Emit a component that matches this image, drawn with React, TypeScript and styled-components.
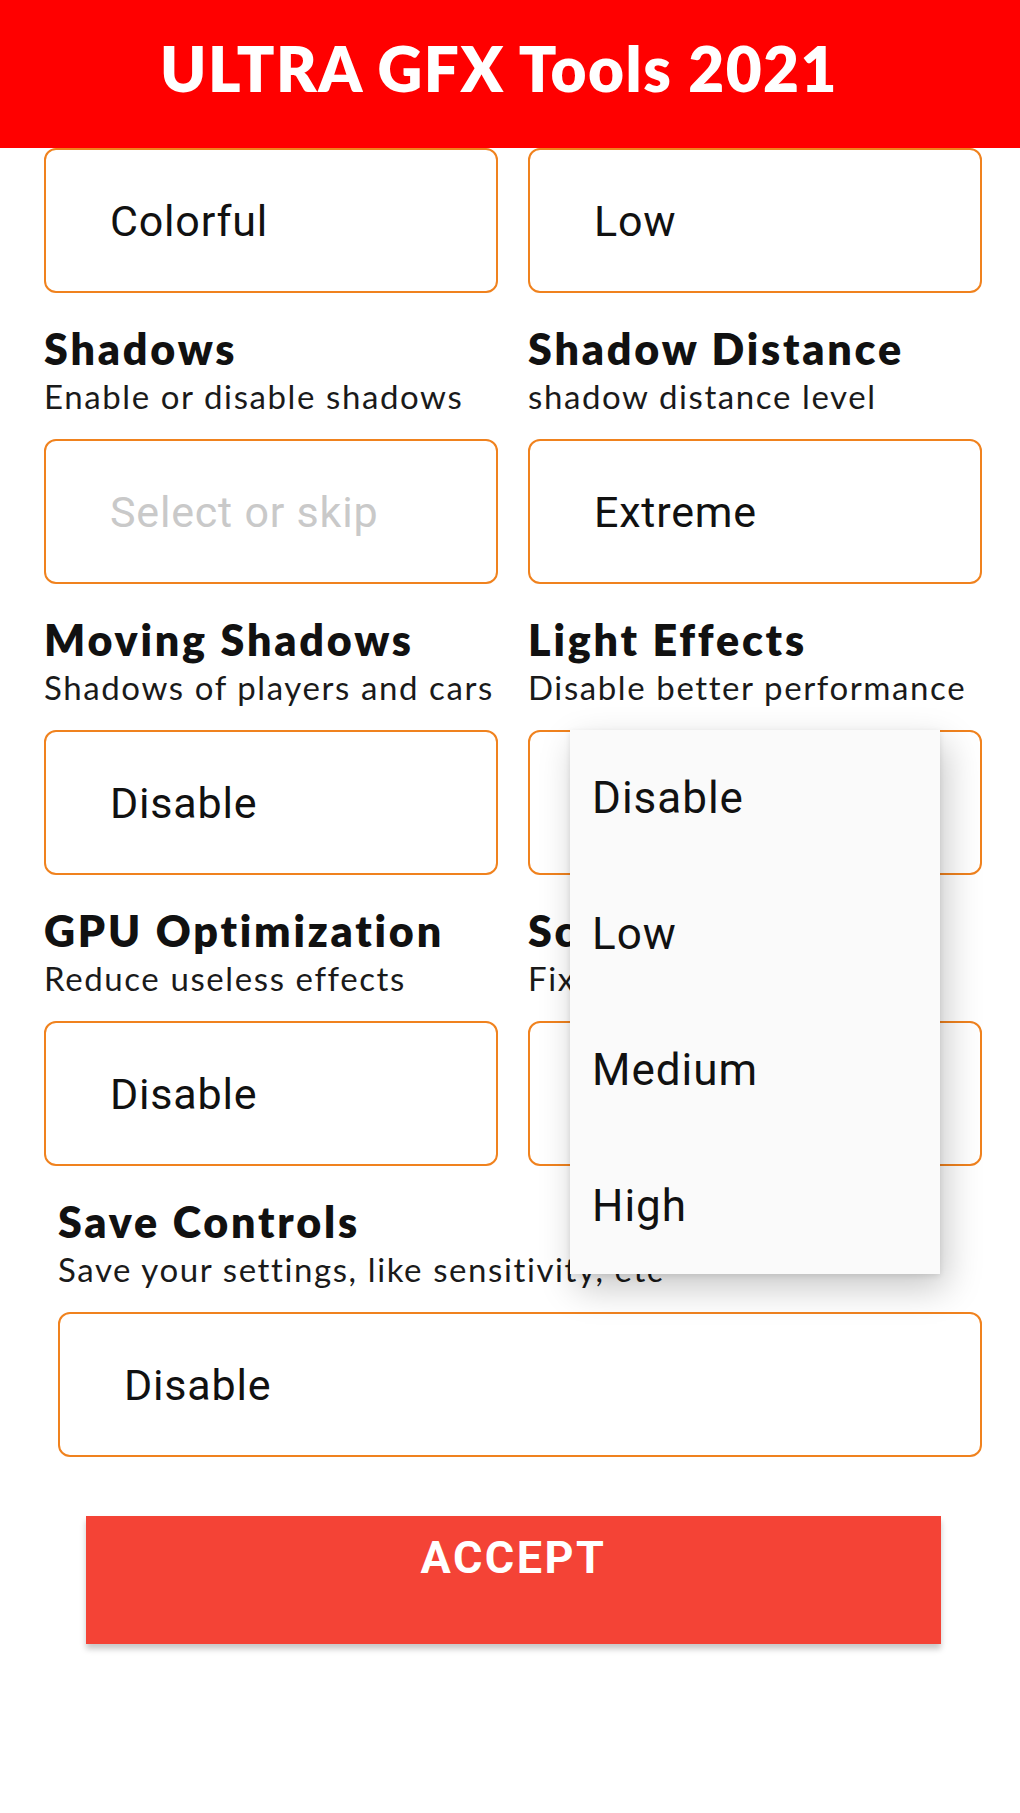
import React from "react";
import styled, { createGlobalStyle } from "styled-components";

//  Styles
const GlobalStyle = createGlobalStyle`
  html, body {
    margin: 0;
    padding: 0;
    background: #ffffff;
  }
  body {
    font-family: Lato, "Open Sans", sans-serif;
    color: #111111;
  }
`;

const Page = styled.div`
  width: 1020px;
  min-height: 1813px;
  background: #ffffff;
  overflow: hidden;
`;

const Header = styled.header`
  height: 148px;
  background: #ff0000;
  display: flex;
  justify-content: center;
  align-items: center;
  padding: 0 22px 12px 0;
  box-sizing: border-box;
`;

const Title = styled.h1`
  margin: 0;
  color: #ffffff;
  font-family: Lato, sans-serif;
  font-weight: 800;
  font-size: 62px;
  letter-spacing: 1.5px;
`;

const Grid = styled.div`
  display: grid;
  grid-template-columns: 1fr 1fr;
  column-gap: 30px;
  padding: 0 38px 0 44px;
`;

const Field = styled.div`
  position: relative;
  display: flex;
  flex-direction: column;
`;

const Wide = styled.div`
  padding: 0 38px 0 58px;
`;

const Label = styled.div`
  padding-top: 34px;
  margin-bottom: 21px;
  white-space: nowrap;
`;

const LabelTitle = styled.div`
  font-family: Lato, sans-serif;
  font-weight: 800;
  font-size: 43px;
  line-height: 44px;
  letter-spacing: 2.8px;
  color: #111111;
`;

const LabelSub = styled.div`
  margin-top: 3px;
  font-family: Lato, sans-serif;
  font-size: 33px;
  line-height: 44px;
  letter-spacing: 1.6px;
  color: #1a1a1a;
`;

const Select = styled.div<{ $empty?: boolean }>`
  height: 145px;
  box-sizing: border-box;
  border: 2px solid #f0821e;
  border-radius: 12px;
  display: flex;
  align-items: center;
  padding-left: 64px;
  font-family: Roboto, sans-serif;
  font-size: 43px;
  letter-spacing: 0.8px;
  color: ${(p) => (p.$empty ? "#c9c9c9" : "#111111")};
  background: #ffffff;
`;

const Menu = styled.ul`
  position: absolute;
  left: 42px;
  width: 370px;
  margin: 0;
  padding: 0;
  list-style: none;
  background: #fafafa;
  box-shadow: 6px 14px 34px rgba(0, 0, 0, 0.22), 0 2px 6px rgba(0, 0, 0, 0.1);
  z-index: 5;
`;

const MenuItem = styled.li`
  height: 136px;
  display: flex;
  align-items: center;
  padding-left: 22px;
  font-family: Roboto, sans-serif;
  font-size: 44px;
  letter-spacing: 1px;
  color: #111111;
`;

const ButtonRow = styled.div`
  padding: 59px 79px 0 86px;
`;

const AcceptButton = styled.button`
  width: 100%;
  height: 128px;
  border: none;
  border-radius: 0;
  background: #f44336;
  color: #ffffff;
  font-family: Roboto, sans-serif;
  font-weight: 700;
  font-size: 45px;
  line-height: 52px;
  letter-spacing: 2.5px;
  padding: 16px 0 0;
  display: flex;
  justify-content: center;
  align-items: flex-start;
  box-shadow: 0 5px 6px rgba(0, 0, 0, 0.22);
  cursor: pointer;
`;

type Setting = {
  title?: string;
  sub?: string;
  value?: string;
  options?: string[];
};

const settings: Setting[] = [
  { value: "Colorful" },
  { value: "Low" },
  { title: "Shadows", sub: "Enable or disable shadows" },
  { title: "Shadow Distance", sub: "shadow distance level", value: "Extreme" },
  { title: "Moving Shadows", sub: "Shadows of players and cars", value: "Disable" },
  {
    title: "Light Effects",
    sub: "Disable better performance",
    value: "Disable",
    options: ["Disable", "Low", "Medium", "High"],
  },
  { title: "GPU Optimization", sub: "Reduce useless effects", value: "Disable" },
  { title: "Screen Fix", sub: "Fix screen lag", value: "Disable" },
];

const SettingField = ({ title, sub, value, options }: Setting) => (
  <Field>
    {title && (
      <Label>
        <LabelTitle>{title}</LabelTitle>
        <LabelSub>{sub}</LabelSub>
      </Label>
    )}
    <Select $empty={!value}>{value || "Select or skip"}</Select>
    {options && (
      <Menu style={{ bottom: 145 - options.length * 136 }}>
        {options.map((o) => (
          <MenuItem key={o}>{o}</MenuItem>
        ))}
      </Menu>
    )}
  </Field>
);

//  App Component
const App = () => {
  return (
    <Page>
      <GlobalStyle />
      <Header>
        <Title>ULTRA GFX Tools 2021</Title>
      </Header>
      <Grid>
        {settings.map((s, i) => (
          <SettingField key={i} {...s} />
        ))}
      </Grid>
      <Wide>
        <SettingField
          title="Save Controls"
          sub="Save your settings, like sensitivity, etc"
          value="Disable"
        />
      </Wide>
      <ButtonRow>
        <AcceptButton>ACCEPT</AcceptButton>
      </ButtonRow>
    </Page>
  );
};

export default App;
